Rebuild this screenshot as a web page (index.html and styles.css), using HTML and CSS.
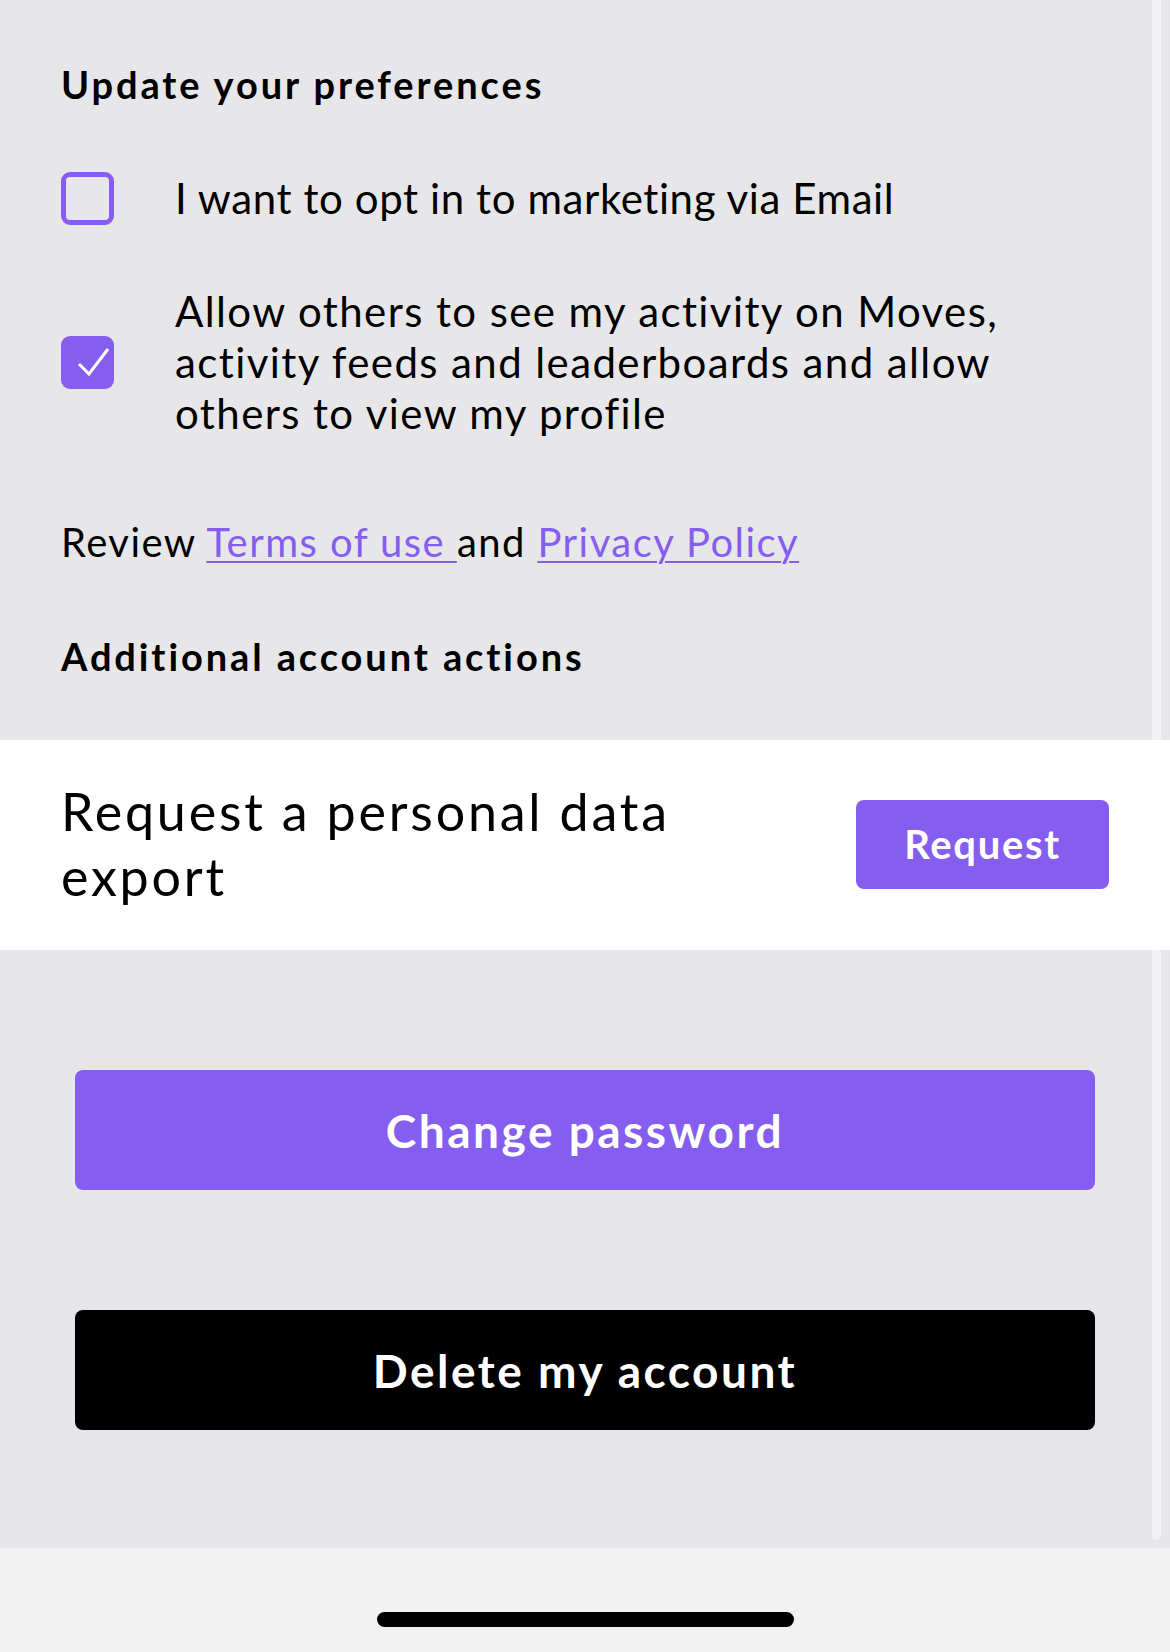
FILE: index.html
```html
<!DOCTYPE html>
<html lang="en">
<head>
  <meta charset="UTF-8" />
  <meta name="viewport" content="width=device-width, initial-scale=1.0"/>
  <title>Account settings</title>
  <link rel="stylesheet" href="styles.css">
</head>
<body>

  <main class="settings">
    <div class="scrollbar"></div>

    <!-- Preferences -->
    <section class="prefs">
      <h2 class="section-title">Update your preferences</h2>

      <label class="pref-row first">
        <span class="check"></span>
        <span class="pref-text">I want to opt in to marketing via Email</span>
      </label>

      <label class="pref-row">
        <span class="check checked">
          <svg width="53" height="53" viewBox="0 0 53 53">
            <polyline points="18,28 28,38 47,13" fill="none" stroke="#fff" stroke-width="3"/>
          </svg>
        </span>
        <span class="pref-text">Allow others to see my activity on Moves, activity feeds and leaderboards and allow others to view my profile</span>
      </label>

      <p class="review">Review <a href="#">Terms of use </a>and <a href="#">Privacy Policy</a></p>

      <h2 class="section-title actions-title">Additional account actions</h2>
    </section>

    <!-- Data export -->
    <div class="export-row">
      <span class="export-text">Request a personal data export</span>
      <button class="btn-request">Request</button>
    </div>

    <div class="account-buttons">
      <button class="btn-wide btn-purple">Change password</button>
      <button class="btn-wide btn-black">Delete my account</button>
    </div>
  </main>

  <div class="home-bar">
    <span class="home-indicator"></span>
  </div>

</body>
</html>
```

FILE: styles.css
```css
body {
  font-family: Lato, "Liberation Sans", sans-serif;
  background: #e7e7ea;
  color: #000;
  margin: 0;
  padding: 0;
}
.settings {
  position: relative;
}
.scrollbar {
  position: absolute;
  top: 0;
  right: 9px;
  width: 9px;
  height: 1540px;
  background: #f2f2f4;
  border-radius: 0 0 5px 5px;
}
.prefs {
  padding: 62px 61px 62px 61px;
}
.section-title {
  margin: 0;
  font-size: 38px;
  line-height: 44px;
  font-weight: 700;
  letter-spacing: 2.9px;
}
.pref-row {
  display: flex;
  align-items: center;
  gap: 61px;
  margin-top: 61px;
  font-size: 42px;
  line-height: 51px;
  letter-spacing: 1.4px;
}
.pref-row.first {
  margin-top: 66px;
  line-height: 53px;
  letter-spacing: 0.6px;
}
.check {
  flex: none;
  width: 53px;
  height: 53px;
  box-sizing: border-box;
  border: 5px solid #855ef0;
  border-radius: 9px;
}
.check.checked {
  border: none;
  background: #855ef0;
}
.check svg {
  display: block;
}
.pref-text {
  max-width: 860px;
}
.review {
  margin: 79px 0 0;
  font-size: 40px;
  line-height: 48px;
  letter-spacing: 1.45px;
}
.review a {
  color: #855ef0;
  text-decoration: underline;
  text-decoration-thickness: 2px;
  text-underline-offset: 4px;
}
.actions-title {
  margin-top: 68px;
}
.export-row {
  position: relative;
  z-index: 1;
  display: flex;
  align-items: center;
  justify-content: space-between;
  background: #fff;
  padding: 39px 61px 41px 61px;
}
.export-text {
  max-width: 700px;
  font-size: 52px;
  line-height: 65px;
  letter-spacing: 2.8px;
}
button {
  font-family: inherit;
  font-weight: 700;
  color: #fff;
  border: none;
  border-radius: 8px;
  cursor: pointer;
}
.btn-request {
  width: 253px;
  height: 89px;
  background: #855ef0;
  font-size: 40px;
  letter-spacing: 1.7px;
}
.account-buttons {
  display: flex;
  flex-direction: column;
  gap: 120px;
  padding: 120px 75px 118px 75px;
}
.btn-wide {
  height: 120px;
  font-size: 46px;
  letter-spacing: 2.5px;
}
.btn-purple {
  background: #855ef0;
}
.btn-black {
  background: #000;
}
.home-bar {
  height: 104px;
  background: #f2f2f2;
  display: flex;
  justify-content: center;
}
.home-indicator {
  margin-top: 64px;
  width: 417px;
  height: 15px;
  border-radius: 8px;
  background: #000;
}
```
